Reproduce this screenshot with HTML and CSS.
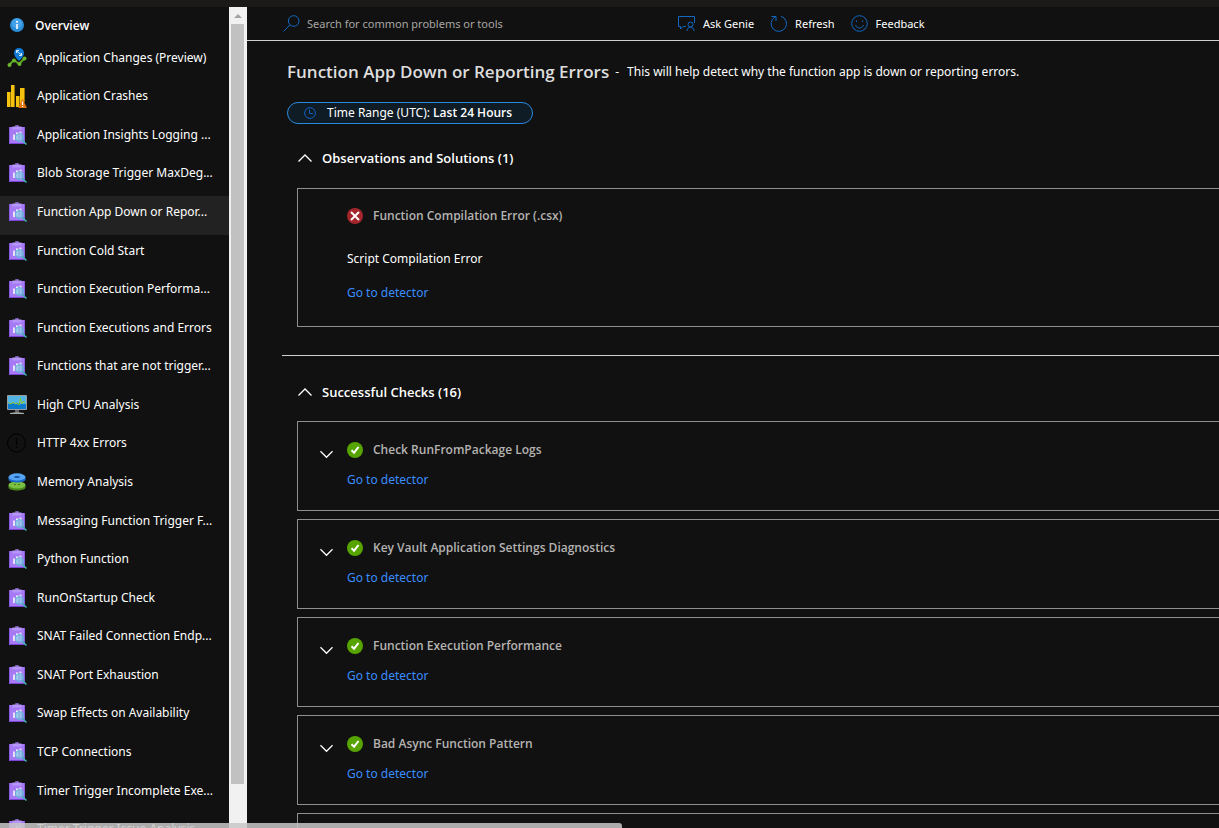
FILE: index.html
```html
<!DOCTYPE html>
<html lang="en">
<head>
<meta charset="utf-8">
<meta name="viewport" content="width=device-width, initial-scale=1">
<title>Function App Down or Reporting Errors</title>
<link rel="stylesheet" href="styles.css">
</head>
<body>
<svg class="sprite" aria-hidden="true">
  <symbol id="detector" viewBox="0 0 20 20">
    <rect x="2" y="2" width="16" height="17" fill="#a67af4"/>
    <path d="M2 18h16v1H2z" fill="#7a45d6"/>
    <path d="M2 2h1v17H2zM17 2h1v17h-1z" fill="#8a5ae0"/>
    <path d="M5.500 1.500h3V0h3v1.500h3V4.500h-9z" fill="#b796f9"/>
    <rect x="9" y="0" width="2" height="1.500" fill="#7d5bb8"/>
    <path d="M6 9.500h2V15H6zM12.500 6.500h2V15h-2z" fill="#e9def9"/>
    <path d="M9 7.500h2.500V15H9z" fill="#f7f2ff"/>
    <circle cx="12.500" cy="12.500" r="4" fill="#6fb9df" fill-opacity=".65" stroke="#62b6d8"/>
    <path d="M15.500 15.500l4 4" stroke="#36b5ab" stroke-width="1.500"/>
  </symbol>
  <symbol id="changes" viewBox="0 0 20 20">
    <path d="M2 17l5-5 5 4 6-6" fill="none" stroke="#5da522" stroke-width="2"/>
    <g fill="#6cb52d"><circle cx="2.500" cy="17" r="2"/><circle cx="7" cy="12.500" r="2"/><circle cx="12.500" cy="16" r="2"/><circle cx="17.500" cy="10.500" r="2"/></g>
    <path d="M12 13C9 10 7 8 7 5a5 5 0 0 1 10 0c0 3-2 5-5 8z" fill="#0f7bd6"/>
    <path d="M9.500 5V2.500H12M14.500 5v2.500H12M9.500 2.500l2.500 3M14.500 7.500l-2.500-3" fill="none" stroke="#d5edff"/>
  </symbol>
  <symbol id="crashes" viewBox="0 0 20 23">
    <path d="M0 7h3v15H0zM4 0h4v22H4zM9 11h3v11H9zM13 3h4v19h-4z" fill="#f3c30f"/>
    <path d="M3 7h1v15H3zM7 0h1v22H7zM12 11h1v11h-1zM17 3h1v14h-1z" fill="#987300"/>
    <path d="M15.500 13.500L20 23h-9z" fill="#df7109"/>
    <path d="M15.500 16.500v3.500M15.500 21v1" stroke="#fff" stroke-width="1.300"/>
  </symbol>
  <symbol id="cpu" viewBox="0 0 20 20">
    <rect x="0" y="0" width="20" height="15" rx="1" fill="#9c9c9c"/>
    <rect x="1" y="1" width="18" height="13" fill="#50b4e5"/>
    <path d="M1 9l4-1 3 1 3-1 3 1h5v5H1z" fill="#0b7bd0"/>
    <path d="M1.500 7.500L4 9l2-2 2 2 2-1 2 2 1.500-7 1 6 1.500-2.500L18 8" fill="none" stroke="#8fc62d"/>
    <path d="M8 15h4v2.500H8z" fill="#686868"/><path d="M3 18q7-1.500 14 0v1H3z" fill="#aaa"/>
  </symbol>
  <symbol id="http" viewBox="0 0 20 20">
    <circle cx="9.500" cy="10" r="9" fill="none" stroke="#000"/>
    <path d="M9.500 5v7M9.500 13.500V15" stroke="#000" stroke-width="1.200"/>
  </symbol>
  <symbol id="memory" viewBox="0 0 20 18">
    <path d="M1.500 12v2.500c0 4 17 4 17 0V12z" fill="#4a8a1a"/><ellipse cx="10" cy="12" rx="8.500" ry="3.400" fill="#7bc043"/>
    <path d="M7 11.500h2M11 11.500h2" stroke="#3f7a18" stroke-width="1.200"/>
    <path d="M1.500 4v2.500c0 4 17 4 17 0V4z" fill="#1b69c9"/><ellipse cx="10" cy="4" rx="8.500" ry="3.700" fill="#55a3f2"/>
    <ellipse cx="10" cy="4" rx="3" ry="1.100" fill="#1757a6"/>
  </symbol>
  <symbol id="up" viewBox="0 0 16 10"><path d="M1.500 8.500L8 2l6.500 6.500" fill="none" stroke="#fff" stroke-width="1.300"/></symbol>
  <symbol id="down" viewBox="0 0 14 9"><path d="M.5 1L7 7.500 13.500 1" fill="none" stroke="#fff" stroke-width="1.300"/></symbol>
  <symbol id="ok" viewBox="0 0 16 16"><circle cx="8" cy="8" r="8" fill="#57a300"/><path d="M4.500 8.200l2.600 2.500L11.500 5" fill="none" stroke="#fff" stroke-width="2"/></symbol>
  <symbol id="error" viewBox="0 0 16 16"><circle cx="8" cy="8" r="8" fill="#a4262c"/><path d="M4 4l8 8M12 4l-8 8" stroke="#fff" stroke-width="2"/></symbol>
</svg>

<div class="strip"></div>
<div class="shell">
  <nav class="sidebar" aria-label="Detectors">
    <a class="overview" href="#">
      <svg class="info" viewBox="0 0 14 14" aria-hidden="true"><circle cx="7" cy="7" r="7" fill="#2b8edb"/><circle cx="7" cy="5.500" r="5" fill="#45a2e8"/><path d="M7 6v5" stroke="#fff" stroke-width="1.600"/><circle cx="7" cy="3.700" r="1" fill="#fff"/></svg>
      <span>Overview</span>
    </a>
    <ul class="list">
      <li><a href="#"><svg><use href="#changes"/></svg><span>Application Changes (Preview)</span></a></li>
      <li><a href="#"><svg class="tall"><use href="#crashes"/></svg><span>Application Crashes</span></a></li>
      <li><a href="#"><svg><use href="#detector"/></svg><span>Application Insights Logging ...</span></a></li>
      <li><a href="#"><svg><use href="#detector"/></svg><span>Blob Storage Trigger MaxDeg...</span></a></li>
      <li><a class="selected" aria-current="page" href="#"><svg><use href="#detector"/></svg><span>Function App Down or Repor...</span></a></li>
      <li><a href="#"><svg><use href="#detector"/></svg><span>Function Cold Start</span></a></li>
      <li><a href="#"><svg><use href="#detector"/></svg><span>Function Execution Performa...</span></a></li>
      <li><a href="#"><svg><use href="#detector"/></svg><span>Function Executions and Errors</span></a></li>
      <li><a href="#"><svg><use href="#detector"/></svg><span>Functions that are not trigger...</span></a></li>
      <li><a href="#"><svg><use href="#cpu"/></svg><span>High CPU Analysis</span></a></li>
      <li><a href="#"><svg><use href="#http"/></svg><span>HTTP 4xx Errors</span></a></li>
      <li><a href="#"><svg><use href="#memory"/></svg><span>Memory Analysis</span></a></li>
      <li><a href="#"><svg><use href="#detector"/></svg><span>Messaging Function Trigger F...</span></a></li>
      <li><a href="#"><svg><use href="#detector"/></svg><span>Python Function</span></a></li>
      <li><a href="#"><svg><use href="#detector"/></svg><span>RunOnStartup Check</span></a></li>
      <li><a href="#"><svg><use href="#detector"/></svg><span>SNAT Failed Connection Endp...</span></a></li>
      <li><a href="#"><svg><use href="#detector"/></svg><span>SNAT Port Exhaustion</span></a></li>
      <li><a href="#"><svg><use href="#detector"/></svg><span>Swap Effects on Availability</span></a></li>
      <li><a href="#"><svg><use href="#detector"/></svg><span>TCP Connections</span></a></li>
      <li><a href="#"><svg><use href="#detector"/></svg><span>Timer Trigger Incomplete Exe...</span></a></li>
      <li><a href="#"><svg><use href="#detector"/></svg><span>Timer Trigger Issue Analysis</span></a></li>
    </ul>
  </nav>
  <div class="track" aria-hidden="true">
    <svg class="arrow" viewBox="0 0 8 4"><path d="M0 4l4-4 4 4z" fill="#a3a3a3"/></svg>
    <div class="thumb"></div>
  </div>

  <main class="main">
    <header class="toolbar">
      <label class="search">
        <svg viewBox="0 0 17 17" aria-label="Search"><circle cx="10.700" cy="6" r="5.300"/><path d="M7 9.800L.5 16.500"/></svg>
        <input type="text" placeholder="Search for common problems or tools">
      </label>
      <div class="actions">
        <button type="button"><svg viewBox="0 0 17 17"><path d="M8 11.500H5L2.500 14v-2.500H.5v-10h16V8"/><circle cx="12.500" cy="9.500" r="2.500"/><path d="M9 16c0-5 7-5 7 0"/></svg>Ask Genie</button>
        <button type="button"><svg viewBox="0 0 17 17"><path d="M11 1.300A7.700 7.700 0 1 1 5 2M1.500 1.500h4.500V6"/></svg>Refresh</button>
        <button type="button"><svg viewBox="0 0 17 17"><circle cx="8.500" cy="8.500" r="7.800"/><path d="M4.500 10c1.500 4 6.500 4 8 0M5.500 5.500v1.500M11.500 5.500v1.500"/></svg>Feedback</button>
      </div>
    </header>

    <div class="content">
      <div class="heading">
        <h1>Function App Down or Reporting Errors</h1>
        <span class="dash">-</span>
        <p>This will help detect why the function app is down or reporting errors.</p>
      </div>
      <button type="button" class="range">
        <svg viewBox="0 0 12 12" aria-hidden="true"><circle cx="6" cy="6" r="5.400"/><path d="M5.500 2.500v4h3.500"/></svg>
        <span>Time Range (UTC): <b>Last 24 Hours</b></span>
      </button>

      <section>
        <h2><button type="button" aria-expanded="true"><svg><use href="#up"/></svg>Observations and Solutions (1)</button></h2>
        <article class="card finding">
          <h3><svg><use href="#error"/></svg>Function Compilation Error (.csx)</h3>
          <p>Script Compilation Error</p>
          <a href="#">Go to detector</a>
        </article>
      </section>
      <section class="checks">
        <h2><button type="button" aria-expanded="true"><svg><use href="#up"/></svg>Successful Checks (16)</button></h2>
        <article class="card check">
          <button type="button" aria-label="Expand"><svg><use href="#down"/></svg></button>
          <div><h3><svg><use href="#ok"/></svg>Check RunFromPackage Logs</h3><a href="#">Go to detector</a></div>
        </article>
        <article class="card check">
          <button type="button" aria-label="Expand"><svg><use href="#down"/></svg></button>
          <div><h3><svg><use href="#ok"/></svg>Key Vault Application Settings Diagnostics</h3><a href="#">Go to detector</a></div>
        </article>
        <article class="card check">
          <button type="button" aria-label="Expand"><svg><use href="#down"/></svg></button>
          <div><h3><svg><use href="#ok"/></svg>Function Execution Performance</h3><a href="#">Go to detector</a></div>
        </article>
        <article class="card check">
          <button type="button" aria-label="Expand"><svg><use href="#down"/></svg></button>
          <div><h3><svg><use href="#ok"/></svg>Bad Async Function Pattern</h3><a href="#">Go to detector</a></div>
        </article>
        <article class="card check"></article>
      </section>
    </div>
  </main>
</div>
<div class="hscroll" aria-hidden="true"></div>
</body>
</html>
```
FILE: styles.css
```css
* { box-sizing: border-box; }
body {
  margin: 0;
  height: 100vh;
  display: flex;
  flex-direction: column;
  overflow: hidden;
  background: #111;
  color: #fff;
  font: 12px/20px "Segoe UI", "Noto Sans", sans-serif;
}
h1, h2, h3, b, .overview { font-family: "Segoe UI", "Open Sans", sans-serif; font-weight: 600; }
h1, h2, h3, p, ul { margin: 0; padding: 0; }
a { color: inherit; text-decoration: none; }
button { border: 0; padding: 0; background: none; color: inherit; font: inherit; }
svg { flex: none; }
.sprite { display: none; }
.strip { flex: none; height: 7px; background: #1b1a19; }
.shell { flex: 1; min-height: 0; display: flex; }

.sidebar { flex: none; width: 229px; display: flex; flex-direction: column; overflow: hidden; white-space: nowrap; }
.overview { flex: none; height: 35px; padding: 9px 0 0 10px; display: flex; gap: 11px; }
.info { width: 14px; height: 14px; margin-top: 2px; }
.list {
  flex: 1;
  min-height: 0;
  margin-bottom: -24px;
  display: grid;
  grid-template-rows: repeat(21, minmax(38px, 1fr));
  list-style: none;
}
.list a { height: 100%; display: flex; align-items: center; gap: 10px; padding: 0 0 7px 7px; }
.list svg { width: 20px; height: 20px; }
.list .tall { height: 23px; }
.selected { background: #222; }

.track { flex: none; width: 18px; padding: 7px 3px 44px 2px; background: #f1f1f1; display: flex; flex-direction: column; align-items: center; gap: 6px; }
.arrow { width: 8px; height: 4px; }
.thumb { flex: 1; width: 100%; background: #c1c1c1; }

.main { flex: 1; min-width: 0; overflow: hidden; }
.toolbar { height: 34px; padding-left: 36px; border-bottom: 1px solid #d2d0ce; display: flex; align-items: center; font-size: 11px; }
.toolbar svg { width: 17px; height: 17px; fill: none; stroke: #1169c4; stroke-width: 1; }
.search { width: 395px; display: flex; align-items: center; gap: 7px; }
.search input { flex: 1; min-width: 0; border: 0; padding: 0; background: none; color: #fff; font: inherit; }
.search input::placeholder { color: #a8a6a4; opacity: 1; }
.actions { display: flex; gap: 16px; }
.actions button { display: flex; align-items: center; gap: 8px; white-space: nowrap; }

.content { padding: 20px 0 0 35px; }
.heading { display: flex; align-items: center; height: 22px; padding-left: 5px; white-space: nowrap; }
h1 { font-size: 17px; line-height: 22px; color: #dedede; }
.dash { margin: 0 8px 0 6px; }
.range {
  display: flex;
  align-items: center;
  gap: 11px;
  height: 22px;
  margin: 19px 0 24px 5px;
  padding: 0 20px 0 16px;
  border: 1px solid #2a8ae0;
  border-radius: 11px;
  background: #101c25;
}
.range svg { width: 12px; height: 12px; fill: none; stroke: #1160c4; }
section { padding-left: 15px; }
h2 { font-size: 13px; padding-bottom: 20px; }
h2 button { display: flex; align-items: center; gap: 9px; }
h2 svg { width: 16px; height: 10px; }
.card { border: 1px solid #8f8f8f; border-right: 0; }
.card h3 { display: flex; align-items: center; gap: 10px; font-size: 12px; color: #b5b3b1; }
.card h3 svg { width: 16px; height: 16px; }
.card a { color: #3a8dff; }
.finding { padding: 17px 0 23px 49px; }
.finding p { margin: 23px 0 14px; }
.finding a { display: block; width: max-content; }
.checks { margin-top: 28px; border-top: 1px solid #d2d0ce; padding-top: 26px; }
.checks h2 { padding-bottom: 19px; }
.check { min-height: 90px; display: flex; align-items: flex-start; gap: 14px; padding: 18px 0 20px 22px; margin-bottom: 8px; }
.check button { margin-top: 10px; }
.check button svg { display: block; width: 13px; height: 9px; }
.check h3 { margin-bottom: 10px; }
.check div a { display: block; width: max-content; }

.hscroll { position: absolute; left: 0; bottom: 0; width: 51%; height: 5px; border-radius: 0 3px 0 0; background: rgba(200, 200, 200, .85); }
```
